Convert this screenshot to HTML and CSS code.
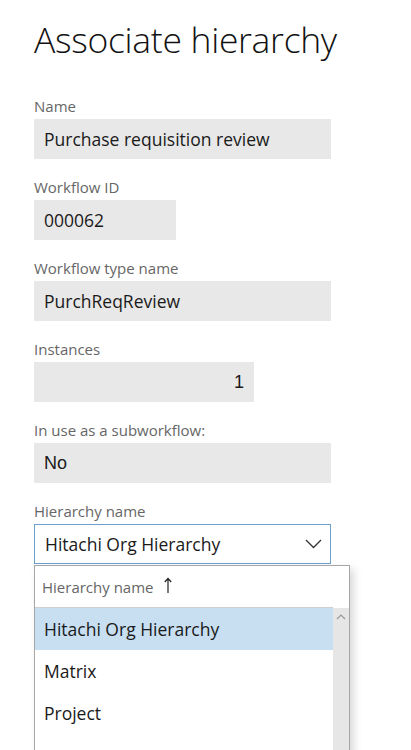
FILE: index.html
```html
<!DOCTYPE html>
<html lang="en">
<head>
  <meta charset="UTF-8" />
  <meta name="viewport" content="width=device-width, initial-scale=1.0" />
  <title>Associate hierarchy</title>
  <link rel="stylesheet" href="styles.css">
</head>
<body>
  <main class="page">
    <h1 class="title">Associate hierarchy</h1>

    <div class="field">
      <label class="field-label">Name</label>
      <div class="box wide">Purchase requisition review</div>
    </div>

    <div class="field">
      <label class="field-label">Workflow ID</label>
      <div class="box short">000062</div>
    </div>

    <div class="field">
      <label class="field-label">Workflow type name</label>
      <div class="box wide">PurchReqReview</div>
    </div>

    <div class="field">
      <label class="field-label">Instances</label>
      <div class="box medium number">1</div>
    </div>

    <div class="field">
      <label class="field-label">In use as a subworkflow:</label>
      <div class="box wide plain">No</div>
    </div>

    <div class="field lookup">
      <label class="field-label">Hierarchy name</label>
      <div class="box wide select">
        <span>Hitachi Org Hierarchy</span>
        <svg class="chevron" width="17" height="10" viewBox="0 0 17 10">
          <path d="M1 1 L8.5 8.5 L16 1" fill="none" stroke="#333" stroke-width="1.3" />
        </svg>
      </div>

      <!-- Lookup popup -->
      <div class="popup">
        <div class="popup-head">
          Hierarchy name
          <svg class="sort" width="8" height="17" viewBox="0 0 8 17">
            <path d="M4 16 V1.5 M0.8 5 L4 1.5 L7.2 5" fill="none" stroke="#222" stroke-width="1.2" />
          </svg>
        </div>
        <div class="popup-body">
          <ul class="options">
            <li class="selected">Hitachi Org Hierarchy</li>
            <li>Matrix</li>
            <li>Project</li>
          </ul>
          <div class="scrollbar">
            <svg width="10" height="6" viewBox="0 0 10 6">
              <path d="M1 5 L5 1 L9 5" fill="none" stroke="#9a9a9a" stroke-width="1.2" />
            </svg>
          </div>
        </div>
      </div>
    </div>
  </main>
</body>
</html>
```

FILE: styles.css
```css
* {
  margin: 0;
  padding: 0;
  box-sizing: border-box;
}

html, body {
  height: 100%;
  overflow: hidden;
}

body {
  font-family: 'Open Sans', 'Noto Sans', sans-serif;
  background-color: white;
  color: #222;
}

.page {
  padding: 12px 0 0 34px;
}

.title {
  font-weight: 300;
  font-size: 35.5px;
  line-height: 54px;
  color: #111;
  letter-spacing: -0.3px;
  margin-bottom: 30px;
}

.field {
  margin-bottom: 18px;
}

.field-label {
  display: block;
  font-size: 15px;
  line-height: 20px;
  color: #666;
  margin-bottom: 3px;
}

.box {
  height: 40px;
  background-color: #e8e8e8;
  font-size: 17.5px;
  line-height: 40px;
  padding: 0 10px;
  color: #1a1a1a;
  white-space: nowrap;
}

.box.wide {
  width: 297px;
}

.box.short {
  width: 142px;
}

.box.medium {
  width: 220px;
}

.box.number {
  text-align: right;
  font-family: 'Liberation Sans', Arial, sans-serif;
  font-size: 18px;
}

.box.plain {
  font-family: 'Liberation Sans', Arial, sans-serif;
  font-size: 18px;
}

.lookup {
  position: relative;
}

.box.select {
  background-color: white;
  border: 1px solid #6a9fd0;
  line-height: 38px;
  display: flex;
  justify-content: space-between;
  align-items: center;
  padding-right: 8px;
}

.popup {
  position: absolute;
  top: 64px;
  left: 0;
  width: 316px;
  height: 200px;
  background-color: white;
  border: 1px solid #a6a6a6;
  border-bottom: none;
  box-shadow: 4px 4px 8px rgba(0, 0, 0, 0.15);
}

.popup-head {
  height: 42px;
  display: flex;
  align-items: center;
  gap: 10px;
  padding-left: 7px;
  font-size: 15px;
  color: #666;
  border-bottom: 1px solid #cfcfcf;
  margin-right: 16px;
}

.popup-head .sort {
  margin-top: -2px;
}

.popup-body {
  display: flex;
  height: 160px;
}

.options {
  list-style: none;
  flex: 1;
}

.options li {
  height: 42px;
  line-height: 42px;
  padding-left: 9px;
  font-size: 17.5px;
  color: #1a1a1a;
}

.options li.selected {
  background-color: #c8dff2;
}

.scrollbar {
  width: 16px;
  background-color: #e6e6e6;
  display: flex;
  justify-content: center;
  padding-top: 6px;
}
```
